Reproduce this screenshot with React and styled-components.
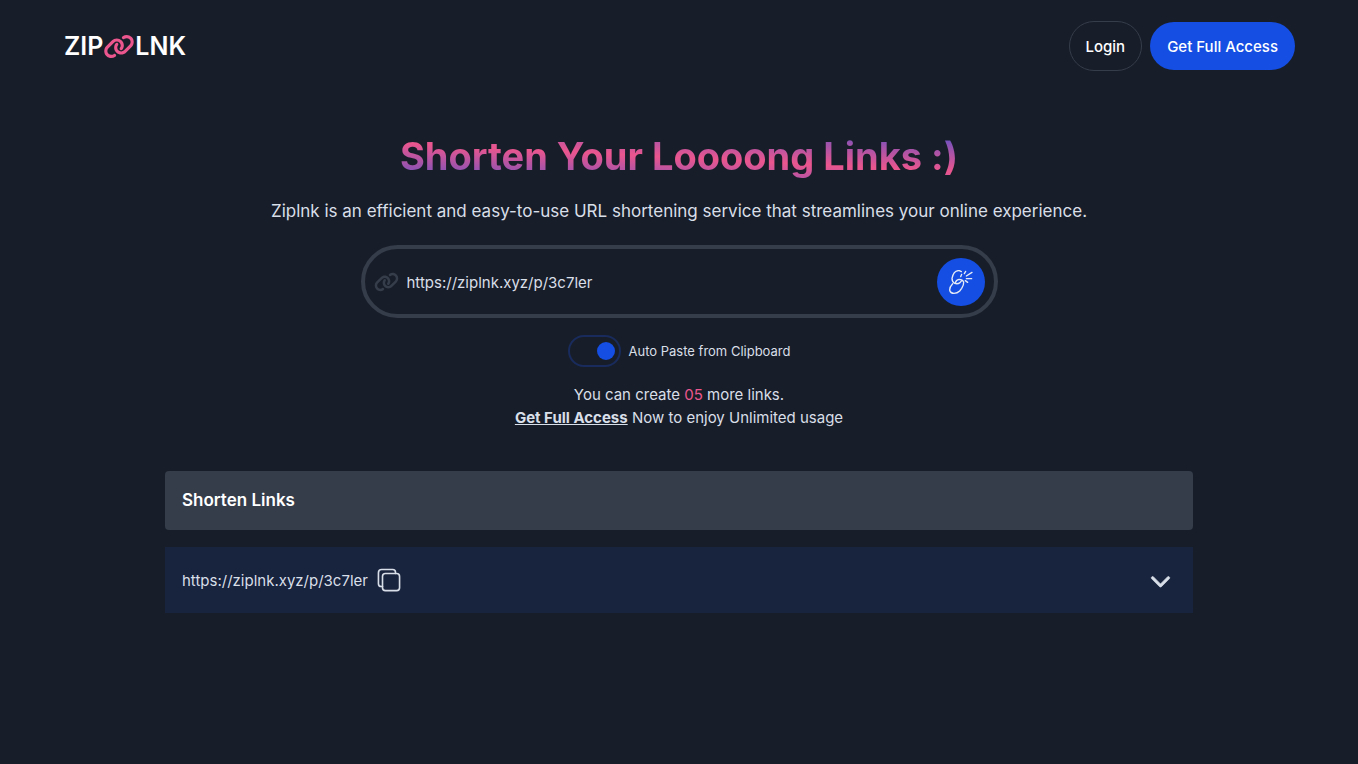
import React, { useState } from "react";
import styled, { createGlobalStyle } from "styled-components";
import { FaLink, FaChevronDown } from "react-icons/fa6";
import { IoCopyOutline } from "react-icons/io5";

const GlobalStyle = createGlobalStyle`
  * {
    box-sizing: border-box;
  }
  body {
    margin: 0;
    min-height: 100vh;
    background-color: #181e29;
    color: #d9dfe8;
    font-family: Inter, sans-serif;
    font-size: 15px;
  }
  button, input {
    font-family: inherit;
  }
`;

const Header = styled.header`
  display: flex;
  justify-content: space-between;
  align-items: center;
  padding: 21px 63px 0 64px;
`;

const Logo = styled.a`
  display: flex;
  align-items: center;
  color: #ffffff;
  font-size: 25px;
  font-weight: 600;
  line-height: 32px;
  text-decoration: none;
  svg {
    width: 32px;
    height: 25px;
    color: #eb568e;
  }
`;

const HeaderButtons = styled.nav`
  display: flex;
  align-items: center;
  gap: 8px;
`;

const PillButton = styled.button`
  height: ${(props) => (props.$primary ? "48px" : "50px")};
  padding: 0 ${(props) => (props.$primary ? "17px" : "16px")};
  border: ${(props) => (props.$primary ? "0" : "1px solid #353c4a")};
  border-radius: 25px;
  background-color: ${(props) => (props.$primary ? "#144ee3" : "transparent")};
  color: #ffffff;
  font-size: 15px;
  font-weight: 500;
  cursor: pointer;
`;

const Hero = styled.section`
  display: flex;
  flex-direction: column;
  align-items: center;
  padding: 61px 16px 0;
  text-align: center;
`;

const Title = styled.h1`
  margin: 0;
  font-size: 38px;
  font-weight: 700;
  line-height: 48px;
  background: linear-gradient(3deg, #144ee3 -30%, #eb568e 48%, #a353aa 75%, #144ee3 115%);
  background-clip: text;
  color: transparent;
`;

const Subtitle = styled.p`
  margin: 17px 0 20px;
  font-size: 17px;
  line-height: 28px;
`;

// Rounded url box with the icon and submit button inside
const UrlForm = styled.form`
  display: flex;
  align-items: center;
  gap: 8px;
  width: 100%;
  max-width: 637px;
  padding: 9px 9px 8px;
  border: 4px solid #353c4a;
  border-radius: 48px;
  svg {
    flex-shrink: 0;
  }
`;

const FormIcon = styled(FaLink)`
  width: 25px;
  height: 20px;
  color: #353c4a;
`;

const UrlInput = styled.input`
  flex: 1;
  min-width: 0;
  padding: 0;
  border: 0;
  outline: 0;
  background: transparent;
  color: #d9dfe8;
  font-size: 15px;
`;

const ShortenButton = styled.button`
  display: flex;
  align-items: center;
  justify-content: center;
  width: 48px;
  height: 48px;
  padding: 0;
  border: 0;
  border-radius: 24px;
  background-color: #144ee3;
  color: #e6ebf5;
  cursor: pointer;
`;

const ToggleLabel = styled.label`
  display: flex;
  align-items: center;
  gap: 8px;
  margin: 17px 0 16px;
  font-size: 13px;
  cursor: pointer;
`;

const Toggle = styled.input`
  appearance: none;
  display: flex;
  align-items: center;
  justify-content: flex-start;
  width: 53px;
  height: 32px;
  margin: 0;
  padding: 0 4px;
  border: 2px solid #182b5c;
  border-radius: 16px;
  cursor: pointer;
  &::before {
    content: "";
    width: 18px;
    height: 18px;
    border-radius: 9px;
    background-color: #353c4a;
  }
  &:checked {
    justify-content: flex-end;
  }
  &:checked::before {
    background-color: #144ee3;
  }
`;

const Note = styled.p`
  margin: 0;
  font-size: 15px;
  line-height: 23px;
`;

const Count = styled.span`
  color: #eb568e;
`;

const AccessLink = styled.a`
  color: #d9dfe8;
  font-weight: 700;
`;

const Links = styled.section`
  width: calc(100% - 330px);
  margin: 42px auto 0;
`;

const LinksHeading = styled.h2`
  margin: 0 0 17px;
  padding: 16px 17px;
  border-radius: 4px;
  background-color: #353c4a;
  color: #ffffff;
  font-size: 17px;
  font-weight: 600;
  line-height: 27px;
`;

const LinkRow = styled.div`
  display: flex;
  align-items: center;
  gap: 8px;
  height: 66px;
  padding: 0 17px;
  background-color: #18233d;
`;

const IconButton = styled.button`
  display: flex;
  padding: 0;
  border: 0;
  background: transparent;
  color: #d9dfe8;
  font-size: ${(props) => props.$size};
  cursor: pointer;
`;

const ExpandButton = styled(IconButton)`
  margin-left: auto;
  padding: 0 5px;
  svg {
    stroke: currentColor;
    stroke-width: 16px;
  }
`;

function BreakLinkIcon() {
  return (
    <svg width="24" height="24" viewBox="0 0 72 72" fill="none" stroke="currentColor" strokeWidth="4" strokeLinecap="round" strokeLinejoin="round">
      <path d="M37 5 L31 2 Q22 1 16 8 Q11 15 9 25 Q9 36 17 40 Q26 43 33 38 L38 32" />
      <path d="M38 13 L35 20" />
      <path d="M19 39 Q21 29 30 28 Q41 28 44 36 Q45 44 38 55 L32 63 Q25 70 15 70 Q4 70 2 60 Q2 50 11 41" />
      <path d="M46 11 L50 4 M52 18 L69 7 M52 26 L68 26 M49 32 L56 37" />
    </svg>
  );
}

function App() {
  const [url, setUrl] = useState("https://ziplnk.xyz/p/3c7ler");
  const [autoPaste, setAutoPaste] = useState(true);

  return (
    <>
      <GlobalStyle />
      <Header>
        <Logo href="/">
          ZIP
          <FaLink />
          LNK
        </Logo>
        <HeaderButtons>
          <PillButton type="button">Login</PillButton>
          <PillButton type="button" $primary>Get Full Access</PillButton>
        </HeaderButtons>
      </Header>

      <main>
        <Hero>
          <Title>Shorten Your Loooong Links :)</Title>
          <Subtitle>
            Ziplnk is an efficient and easy-to-use URL shortening service that streamlines your online experience.
          </Subtitle>
          <UrlForm onSubmit={(e) => e.preventDefault()}>
            <FormIcon />
            <UrlInput
              type="text"
              aria-label="URL"
              value={url}
              onChange={(e) => setUrl(e.target.value)}
            />
            <ShortenButton type="submit" aria-label="Shorten">
              <BreakLinkIcon />
            </ShortenButton>
          </UrlForm>
          <ToggleLabel htmlFor="auto-paste">
            <Toggle
              id="auto-paste"
              type="checkbox"
              checked={autoPaste}
              onChange={(e) => setAutoPaste(e.target.checked)}
            />
            Auto Paste from Clipboard
          </ToggleLabel>
          <Note>
            You can create <Count>05</Count> more links.
          </Note>
          <Note>
            <AccessLink href="/register">Get Full Access</AccessLink> Now to enjoy Unlimited usage
          </Note>
        </Hero>

        <Links>
          <LinksHeading>Shorten Links</LinksHeading>
          <LinkRow>
            <span>https://ziplnk.xyz/p/3c7ler</span>
            <IconButton type="button" aria-label="Copy" $size="26px">
              <IoCopyOutline />
            </IconButton>
            <ExpandButton type="button" aria-label="Expand" $size="21px">
              <FaChevronDown />
            </ExpandButton>
          </LinkRow>
        </Links>
      </main>
    </>
  );
}

export default App;
